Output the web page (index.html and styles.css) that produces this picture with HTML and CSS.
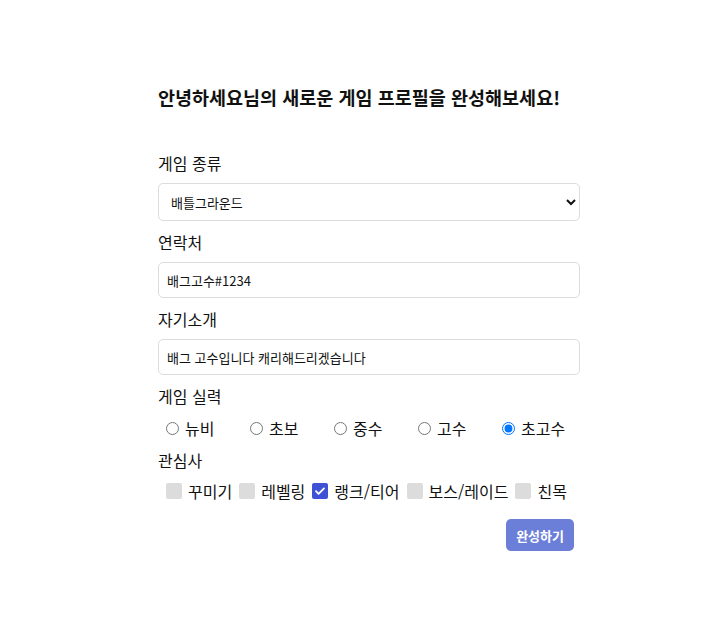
FILE: index.html
```html
<!DOCTYPE html>
<html lang="ko">
<head>
  <meta charset="UTF-8">
  <meta name="viewport" content="width=device-width, initial-scale=1.0">
  <title>게임 프로필</title>
  <link rel="stylesheet" href="styles.css">
</head>
<body>

  <div class="container">
    <h1>안녕하세요님의 새로운 게임 프로필을 완성해보세요!</h1>

    <form class="profile-form">
      <label class="field-label" for="game">게임 종류</label>
      <select id="game" class="field select">
        <option>배틀그라운드</option>
        <option>리그 오브 레전드</option>
        <option>로스트아크</option>
      </select>

      <label class="field-label" for="contact">연락처</label>
      <input id="contact" class="field" type="text" value="배그고수#1234">

      <label class="field-label" for="intro">자기소개</label>
      <input id="intro" class="field" type="text" value="배그 고수입니다 캐리해드리겠습니다">

      <div class="field-label">게임 실력</div>
      <div class="radio-row">
        <label class="radio"><input type="radio" name="level">뉴비</label>
        <label class="radio"><input type="radio" name="level">초보</label>
        <label class="radio"><input type="radio" name="level">중수</label>
        <label class="radio"><input type="radio" name="level">고수</label>
        <label class="radio"><input type="radio" name="level" checked>초고수</label>
      </div>

      <div class="field-label">관심사</div>
      <div class="check-row">
        <label class="check"><span class="box"></span>꾸미기</label>
        <label class="check"><span class="box"></span>레벨링</label>
        <label class="check"><span class="box checked">
          <svg width="16" height="16" viewBox="0 0 16 16"><path d="M4 8.2l2.6 2.6L12 5.4" fill="none" stroke="#fff" stroke-width="1.8" stroke-linecap="round" stroke-linejoin="round"/></svg>
        </span>랭크/티어</label>
        <label class="check"><span class="box"></span>보스/레이드</label>
        <label class="check"><span class="box"></span>친목</label>
      </div>

      <div class="actions">
        <button type="button" class="submit">완성하기</button>
      </div>
    </form>
  </div>

</body>
</html>
```

FILE: styles.css
```css
body {
  margin: 0;
  background-color: #fff;
  color: #111;
  font-family: "Noto Sans CJK KR", "Noto Sans", sans-serif;
}

.container {
  width: 422px;
  padding: 84px 0 0 158px;
}

h1 {
  margin: 0;
  font-size: 18.5px;
  font-weight: 700;
  line-height: 26px;
}

.profile-form {
  display: flex;
  flex-direction: column;
  padding-top: 32px;
}

.field-label {
  font-size: 16px;
  line-height: 22px;
  margin-top: 10px;
  margin-bottom: 9px;
}

.field {
  box-sizing: border-box;
  width: 100%;
  height: 36px;
  padding: 0 8px;
  border: 1px solid #dcdcdc;
  border-radius: 5px;
  background-color: #fff;
  font-family: inherit;
  font-size: 13px;
  color: #111;
}

.select {
  height: 38px;
}

/* 실력 선택 */
.radio-row {
  display: grid;
  grid-template-columns: repeat(5, 84px);
  padding-left: 8px;
  height: 23px;
}

.radio {
  display: flex;
  align-items: center;
  font-size: 16px;
}

.radio input {
  width: 13px;
  height: 13px;
  margin: 0 6px 0 0;
}

/* 관심사 체크박스 */
.check-row {
  display: flex;
  align-items: center;
  padding-left: 8px;
  height: 22px;
}

.check {
  display: flex;
  align-items: center;
  gap: 6px;
  margin-right: 7px;
  font-size: 16px;
}

.box {
  display: block;
  width: 16px;
  height: 16px;
  border-radius: 2px;
  background-color: #dcdcdc;
}

.box.checked {
  background-color: #3f51d4;
}

.box svg {
  display: block;
}

.actions {
  display: flex;
  justify-content: flex-end;
  padding-right: 6px;
  margin-top: 17px;
}

.submit {
  height: 32px;
  padding: 0 10px;
  border: none;
  border-radius: 5px;
  background-color: #6c7fd8;
  color: #fff;
  font-family: inherit;
  font-size: 13px;
  font-weight: 700;
}
```
